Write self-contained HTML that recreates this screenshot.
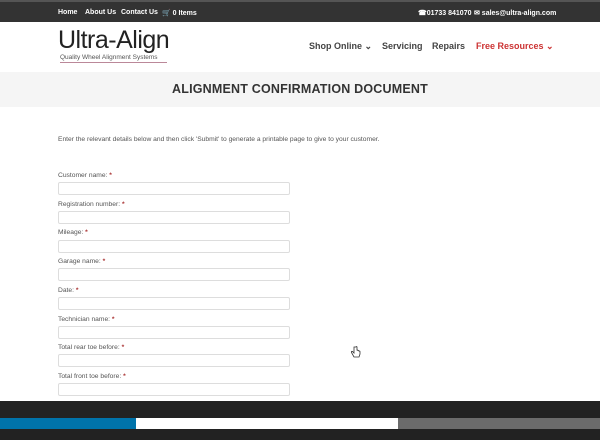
<!DOCTYPE html>
<html><head><meta charset="utf-8"><style>
*{margin:0;padding:0;box-sizing:border-box}
body{width:600px;height:440px;overflow:hidden;background:#fff;font-family:"Liberation Sans",sans-serif;position:relative}
.top{position:absolute;left:0;top:0;width:600px;height:22px;background:#333;border-top:2px solid #555;color:#fff;font-size:7px;font-weight:bold}
.top span{position:absolute;top:7px}
.hdr{position:absolute;top:22px;left:0;width:600px;height:50px;background:#fff}
.logo{position:absolute;left:58px;top:4px;font-size:25px;color:#222;letter-spacing:-0.5px}
.tag{position:absolute;left:60px;top:32px;font-size:6.5px;color:#555;border-bottom:1px solid #b89;padding-bottom:1px;width:107px}
.nav{position:absolute;top:19px;font-size:9px;font-weight:bold;color:#444}
.band{position:absolute;top:72px;left:0;width:600px;height:35px;background:#f5f5f5;text-align:center;font-size:12.5px;font-weight:bold;color:#333;line-height:35px;letter-spacing:0.2px}
.intro{position:absolute;left:58px;top:136px;font-size:6.7px;color:#555}
.lab{position:absolute;left:58px;font-size:6.7px;color:#555}
.lab b{color:#a33}
.inp{position:absolute;left:58px;width:232px;height:13px;border:1px solid #ddd;border-radius:2px;background:#fff}
.foot{position:absolute;left:0;top:401px;width:600px;height:39px;background:#222}
</style></head><body>
<div class="top">
<span style="left:58px">Home</span><span style="left:85px">About Us</span><span style="left:121px">Contact Us</span><span style="left:162px">&#128722; 0 Items</span>
<span style="left:418px">&#9742;01733 841070</span><span style="left:474px">&#9993; sales@ultra-align.com</span>
</div>
<div class="hdr">
<div class="logo">Ultra-Align</div>
<div class="tag">Quality Wheel Alignment Systems</div>
<div class="nav" style="left:309px">Shop Online ⌄</div>
<div class="nav" style="left:382px">Servicing</div>
<div class="nav" style="left:432px">Repairs</div>
<div class="nav" style="left:476px;color:#c33">Free Resources ⌄</div>
</div>
<div class="band">ALIGNMENT CONFIRMATION DOCUMENT</div>
<div class="intro">Enter the relevant details below and then click 'Submit' to generate a printable page to give to your customer.</div>
<div class="lab" style="top:172px">Customer name: <b>*</b></div><div class="inp" style="top:182px"></div>
<div class="lab" style="top:201px">Registration number: <b>*</b></div><div class="inp" style="top:211px"></div>
<div class="lab" style="top:229px">Mileage: <b>*</b></div><div class="inp" style="top:240px"></div>
<div class="lab" style="top:258px">Garage name: <b>*</b></div><div class="inp" style="top:268px"></div>
<div class="lab" style="top:287px">Date: <b>*</b></div><div class="inp" style="top:297px"></div>
<div class="lab" style="top:316px">Technician name: <b>*</b></div><div class="inp" style="top:326px"></div>
<div class="lab" style="top:344px">Total rear toe before: <b>*</b></div><div class="inp" style="top:354px"></div>
<div class="lab" style="top:373px">Total front toe before: <b>*</b></div><div class="inp" style="top:383px"></div>
<svg style="position:absolute;left:351px;top:346px" width="10" height="12" viewBox="0 0 10 12"><path d="M3 1v6l-1.5-1.5c-.8-.5-1.5.3-1 1L3 11h5l1-3V5.5c0-.6-1-.6-1 0V5c0-.6-1-.6-1 0v-.5c0-.6-1-.6-1 0V1c0-.7-1-.7-1 0z" fill="#fff" stroke="#333" stroke-width=".8"/></svg>
<div class="foot">
<div style="position:absolute;top:17px;left:0;width:136px;height:11px;background:#0073aa"></div>
<div style="position:absolute;top:17px;left:136px;width:262px;height:11px;background:#fff"></div>
<div style="position:absolute;top:17px;left:398px;width:202px;height:11px;background:#6b6b6b"></div>
</div>
</body></html>
